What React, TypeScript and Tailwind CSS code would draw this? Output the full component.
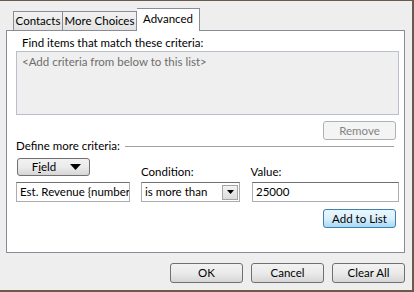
import React from "react";

const btn =
  "flex items-center justify-center rounded-[3px] border border-[#707070] bg-gradient-to-b from-[#f2f2f2] via-[#ebebeb] to-[#d6d6d6] text-[#000]";

function Button({ label, className = "" }: { label: React.ReactNode; className?: string }) {
  return <div className={`${btn} ${className}`}>{label}</div>;
}

export default function App() {
  return (
    <div
      className="flex h-[292px] w-[414px] flex-col whitespace-nowrap border-t border-r-2 border-b-2 border-[#6b5a4c] bg-[#eeeeee] text-[11.5px] text-black"
      style={{ fontFamily: 'Lato, "Liberation Sans", sans-serif' }}
    >
      {/* tabs */}
      <div className="flex h-[29px] items-end pl-[13px]">
        <div className="flex h-[19px] w-[50px] items-center justify-center border border-b-0 border-[#898c95] bg-gradient-to-b from-[#f2f2f2] to-[#e3e3e3] leading-none">
          Contacts
        </div>
        <div className="flex h-[19px] w-[74px] items-center justify-center border border-b-0 border-l-0 border-[#898c95] bg-gradient-to-b from-[#f2f2f2] to-[#e3e3e3] leading-none">
          More Choices
        </div>
        <div className="relative z-10 -mb-px flex h-[23px] w-[63px] items-start justify-center border border-b-0 border-l-0 border-[#898c95] bg-white pt-[4px] leading-none">
          Advanced
        </div>
      </div>

      {/* panel */}
      <div className="ml-[6px] flex h-[223px] w-[399px] flex-col border border-[#898c95] bg-white pl-[9px] pt-[4px]">
        <div className="h-[16px] pl-[6px] leading-[16px]">Find items that match these criteria:</div>
        <div className="h-[64px] w-[383px] border border-[#b9c0cb] bg-[#efefef] px-[5px] pt-[2px] leading-[15px] text-[#6d6d6d]">
          &lt;Add criteria from below to this list&gt;
        </div>
        <div className="mt-[6px] flex w-[383px] justify-end pr-[3px]">
          <div className="flex h-[19px] w-[73px] items-center justify-center rounded-[3px] border border-[#adb2b5] bg-[#f4f4f4] text-[#838383]">
            Remove
          </div>
        </div>
        <div className="flex h-[12px] w-[383px] items-center gap-[5px] pr-[5px]">
          <span className="leading-none">Define more criteria:</span>
          <div className="h-px flex-1 bg-[#a0a0a0]" />
        </div>

        <div className="mt-[6px] flex h-[24px] items-start">
          <Button
            className="ml-px h-[18px] w-[73px] gap-[14px] pl-[6px]"
            label={
              <>
                <span>
                  F<span className="underline">i</span>eld
                </span>
                <svg width="11" height="6" viewBox="0 0 11 6">
                  <path d="M0 0h11L5.5 6z" fill="#000" />
                </svg>
              </>
            }
          />
          <div className="ml-[51px] self-end pb-[3px] leading-[14px]">Condition:</div>
          <div className="ml-[57px] self-end pb-[3px] leading-[14px]">Value:</div>
        </div>

        <div className="flex">
          <div className="flex h-[20px] w-[114px] items-center overflow-hidden border border-[#abadb3] border-t-[#707070] pl-[3px]">
            Est. Revenue {"{"}number
          </div>
          <div className="ml-[11px] flex h-[20px] w-[99px] items-center justify-between border border-[#abadb3] border-t-[#707070] pl-[3px] pr-[1px]">
            <span>is more than</span>
            <div className="flex h-[15px] w-[16px] items-center justify-center border border-[#a5a5a5] bg-gradient-to-b from-[#f3f3f3] to-[#dcdcdc]">
              <svg width="7" height="4" viewBox="0 0 7 4">
                <path d="M0 0h7L3.5 4z" fill="#000" />
              </svg>
            </div>
          </div>
          <div className="ml-[12px] flex h-[20px] w-[147px] items-center border border-[#abadb3] border-t-[#707070] pl-[3px]">
            25000
          </div>
        </div>

        <div className="mt-[7px] flex w-[383px] justify-end pr-[3px]">
          <div className="flex h-[19px] w-[73px] items-center justify-center rounded-[3px] border border-[#3c7fb1] bg-gradient-to-b from-[#eaf6fd] via-[#d9f0fc] to-[#a7d9f5]">
            Add to List
          </div>
        </div>
      </div>

      {/* footer */}
      <div className="mt-[10px] flex justify-end gap-[8px] pr-[7px]">
        <Button className="h-[20px] w-[73px]" label="OK" />
        <Button className="h-[20px] w-[73px]" label="Cancel" />
        <Button className="h-[20px] w-[73px]" label="Clear All" />
      </div>
    </div>
  );
}
